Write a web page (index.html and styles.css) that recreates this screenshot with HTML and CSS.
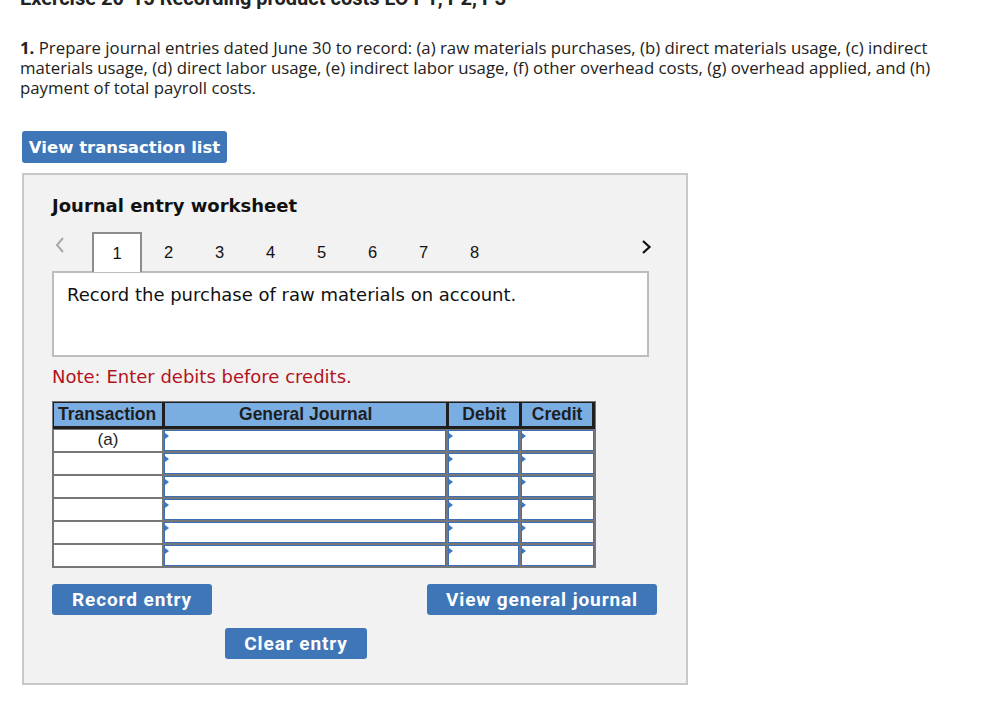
FILE: index.html
```html
<!DOCTYPE html>
<html lang="en">
<head>
  <meta charset="UTF-8">
  <title>Exercise 20-15 Recording product costs</title>
  <link rel="stylesheet" href="styles.css">
</head>
<body>
  <h2 class="exercise-title">Exercise 20-15 Recording product costs LO P1, P2, P3</h2>

  <p class="question"><b>1.</b> Prepare journal entries dated June 30 to record: (a) raw materials purchases, (b) direct materials usage, (c) indirect materials usage, (d) direct labor usage, (e) indirect labor usage, (f) other overhead costs, (g) overhead applied, and (h) payment of total payroll costs.</p>

  <button class="btn btn-list">View transaction list</button>

  <div class="worksheet">
    <h3>Journal entry worksheet</h3>

    <div class="tabs">
      <span class="arrow arrow-prev">
        <svg width="12" height="16" viewBox="0 0 12 16"><path d="M9 1 L3 8 L9 15" fill="none" stroke="#a9a9a9" stroke-width="2"/></svg>
      </span>
      <span class="tab active">1</span>
      <span class="tab">2</span>
      <span class="tab">3</span>
      <span class="tab">4</span>
      <span class="tab">5</span>
      <span class="tab">6</span>
      <span class="tab">7</span>
      <span class="tab">8</span>
      <span class="arrow arrow-next">
        <svg width="12" height="16" viewBox="0 0 12 16"><path d="M2 2 L8.5 8 L2 14" fill="none" stroke="#111" stroke-width="2.2"/></svg>
      </span>
    </div>

    <div class="tab-body">Record the purchase of raw materials on account.</div>

    <p class="note">Note: Enter debits before credits.</p>

    <table class="journal">
      <thead>
        <tr>
          <th class="col-trans">Transaction</th>
          <th class="col-account">General Journal</th>
          <th class="col-debit">Debit</th>
          <th class="col-credit">Credit</th>
        </tr>
      </thead>
      <tbody id="journalRows"></tbody>
    </table>

    <div class="actions">
      <button class="btn">Record entry</button>
      <button class="btn">View general journal</button>
    </div>
    <button class="btn btn-clear">Clear entry</button>
  </div>

  <script>
    // six empty entry lines, only the first one gets the (a) label
    const rows = document.getElementById("journalRows");
    for (let i = 0; i < 6; i++) {
      const tr = document.createElement("tr");
      tr.innerHTML =
        '<td class="trans">' + (i === 0 ? "(a)" : "") + '</td>' +
        '<td><div class="cell"></div></td>' +
        '<td><div class="cell"></div></td>' +
        '<td><div class="cell"></div></td>';
      rows.appendChild(tr);
    }
  </script>
</body>
</html>
```

FILE: styles.css
```css
* {
  margin: 0;
  padding: 0;
  box-sizing: border-box;
}

body {
  font-family: 'Open Sans', 'Lato', sans-serif;
  color: #222;
  background: #fff;
  padding: 0 20px;
  overflow: hidden;
}

.exercise-title {
  font-family: 'Roboto', sans-serif;
  font-size: 20px;
  font-weight: bold;
  line-height: 26px;
  margin-top: -15px;
  color: #222;
}

.question {
  font-size: 16.8px;
  line-height: 20px;
  margin-top: 27px;
  width: 944px;
}

.question b {
  font-weight: bold;
}

.btn {
  font-family: 'Roboto', sans-serif;
  font-weight: bold;
  font-size: 19px;
  letter-spacing: 0.9px;
  color: #fff;
  background: #3e76b8;
  border: none;
  border-radius: 3px;
  height: 32px;
  padding: 0 10px;
  cursor: pointer;
}

.btn-list {
  font-family: 'DejaVu Sans', sans-serif;
  font-size: 16.5px;
  letter-spacing: 0;
  margin: 33px 0 0 2px;
  padding: 0 4px;
  width: 205px;
}

.worksheet {
  margin: 10px 0 0 2px;
  width: 666px;
  height: 512px;
  background: #f2f2f2;
  border: 2px solid #c8c8c8;
  padding: 0 28px;
}

.worksheet h3 {
  font-family: 'DejaVu Sans', sans-serif;
  font-size: 18px;
  font-weight: bold;
  color: #111;
  margin-top: 21px;
  line-height: 20px;
}

.tabs {
  display: flex;
  align-items: flex-end;
  margin-top: 16px;
  height: 40px;
  position: relative;
  z-index: 1;
}

.arrow {
  width: 40px;
  height: 40px;
  display: flex;
  padding-top: 5px;
  padding-left: 2px;
}

.arrow-next {
  margin-left: auto;
  margin-right: 5px;
  padding-left: 0;
  padding-top: 7px;
  width: 12px;
}

.tab {
  width: 51px;
  height: 40px;
  font-family: 'Liberation Sans', sans-serif;
  font-size: 16.5px;
  color: #111;
  text-align: center;
  line-height: 40px;
}

.tab.active {
  width: 50px;
  background: #fff;
  border: 2px solid #8c8c8c;
  border-bottom: none;
  line-height: 38px;
  margin-right: 1px;
}

.tab-body {
  width: 597px;
  height: 86px;
  margin-top: -1px;
  background: #fff;
  border: 2px solid #bdbdbd;
  padding: 11px 13px;
  font-family: 'DejaVu Sans', sans-serif;
  font-size: 18px;
  color: #111;
}

.note {
  font-family: 'DejaVu Sans', sans-serif;
  font-size: 18px;
  color: #b3121c;
  margin-top: 10px;
  line-height: 20px;
}

.journal {
  margin-top: 14px;
  border-collapse: separate;
  border-spacing: 0;
  border: 1px solid #777;
  background: #777;
  width: 544px;
}

.journal th {
  background: #7aaee3;
  font-family: 'Liberation Sans', sans-serif;
  font-size: 17.5px;
  font-weight: bold;
  color: #1e1e1e;
  height: 27px;
  padding: 0;
  border: 1px solid #1f1f1f;
  border-left-width: 2px;
  border-bottom-width: 3px;
}

.journal th:first-child {
  border-left-width: 1px;
  text-align: left;
  padding-left: 4px;
}

.journal th:last-child {
  border-right-width: 3px;
}

.col-trans { width: 110px; }
.col-account { width: 286px; }
.col-debit { width: 73px; }
.col-credit { width: 75px; }

.journal td {
  padding: 0;
  height: 23px;
  border: 1px solid #777;
  background: #777;
}

.journal td.trans {
  background: #fff;
  text-align: center;
  font-family: 'Liberation Sans', sans-serif;
  font-size: 17px;
  line-height: 19px;
  vertical-align: top;
}

.cell {
  position: relative;
  height: 21px;
  background: #fff;
  border: 1px solid #3c6fb5;
}

.cell:before {
  content: '';
  position: absolute;
  top: 2px;
  left: 0;
  border-left: 4px solid #3c77c4;
  border-top: 3px solid transparent;
  border-bottom: 3px solid transparent;
}

.actions {
  display: flex;
  justify-content: space-between;
  width: 605px;
  margin-top: 16px;
}

.actions .btn {
  height: 31px;
}

.actions .btn:first-child {
  width: 160px;
}

.actions .btn:last-child {
  width: 230px;
}

.btn-clear {
  margin: 13px 0 0 173px;
  width: 142px;
  height: 31px;
}
```
